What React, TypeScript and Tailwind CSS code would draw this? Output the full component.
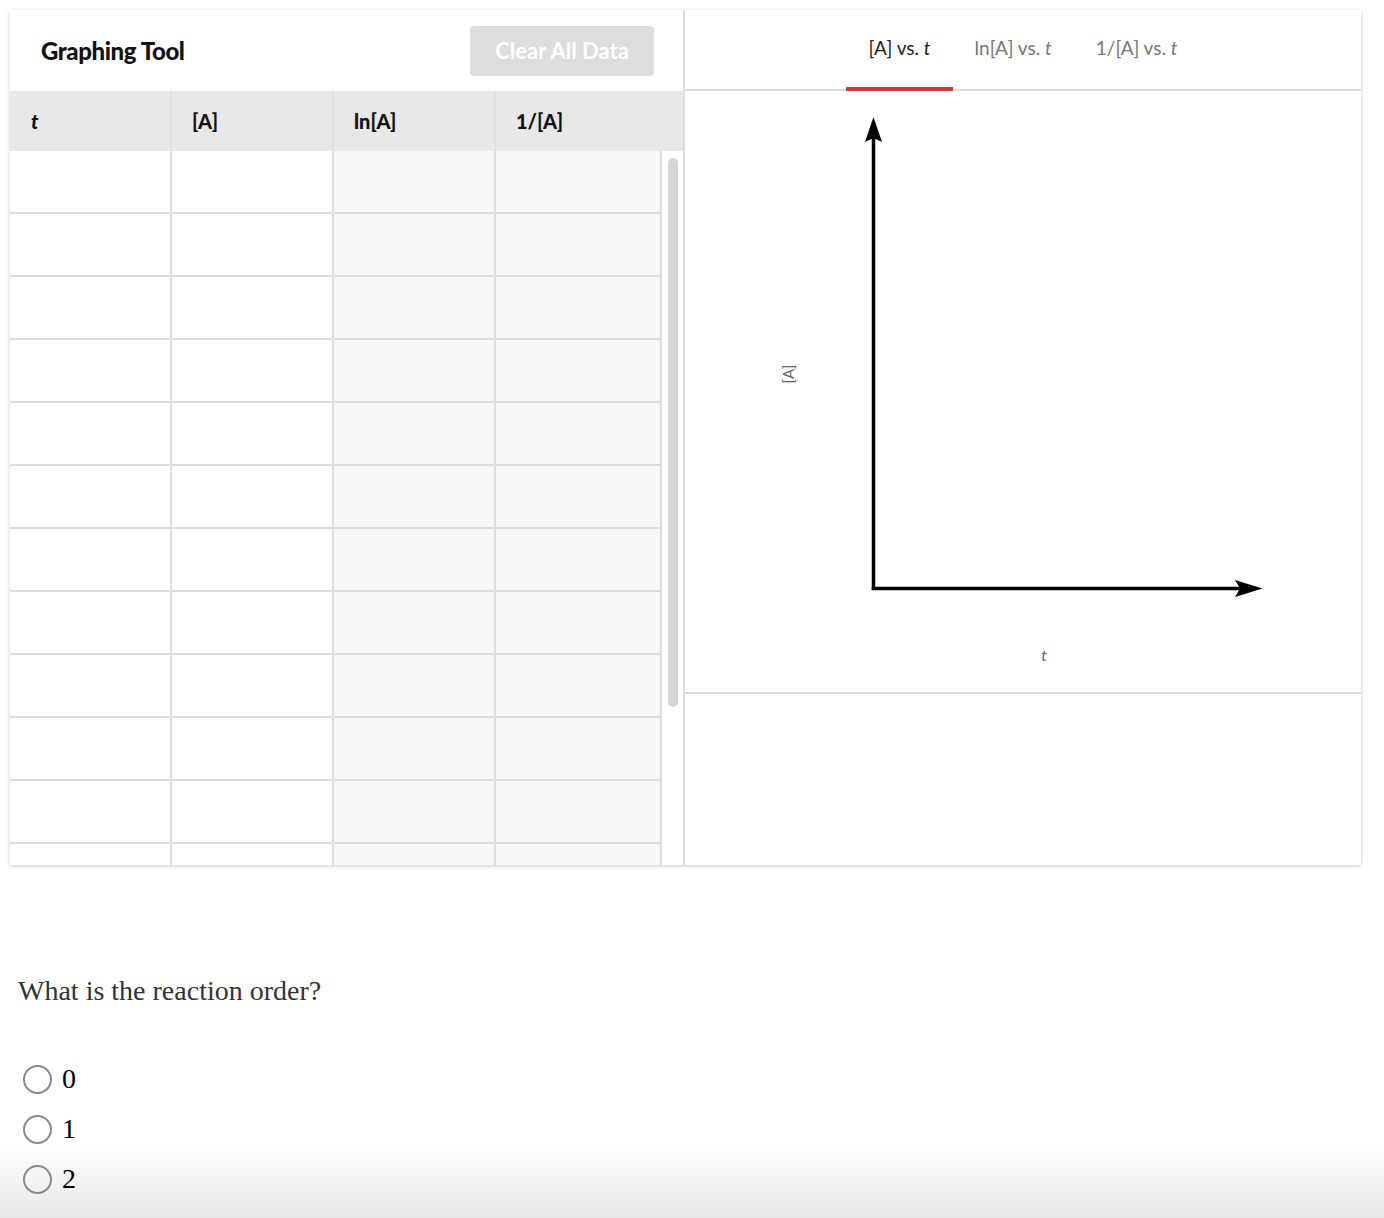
import React, { useState } from 'react';

const SANS = "font-['Lato','Noto_Sans',sans-serif]";

const ROWS = Array.from({ length: 12 });

type Tab = 'a' | 'ln' | 'inv';

const TABS: { id: Tab; label: string }[] = [
  { id: 'a', label: '[A] vs. ' },
  { id: 'ln', label: 'ln[A] vs. ' },
  { id: 'inv', label: '1/[A] vs. ' },
];

const DataTable: React.FC = () => (
  <div className="flex flex-col">
    {/* Column headers */}
    <div className="flex h-[60px] bg-[#e8e8e8] text-[20px] font-black text-[#111]">
      <div className="flex w-[162px] items-center border-r-2 border-[#e0e0e0] pl-[21px] italic">t</div>
      <div className="flex w-[162px] items-center border-r-2 border-[#e0e0e0] pl-[20px]">[A]</div>
      <div className="flex w-[162px] items-center border-r-2 border-[#e0e0e0] pl-[20px]">ln[A]</div>
      <div className="flex flex-1 items-center pl-[20px]">1/[A]</div>
    </div>

    {/* Body + scroll track */}
    <div className="flex h-[714px] overflow-hidden">
      <div className="w-[650px]">
        {ROWS.map((_, i) => (
          <div key={i} className="flex h-[63px] border-b-2 border-[#dddddd]">
            <div className="w-[162px] border-r-2 border-[#dddddd] bg-white" />
            <div className="w-[162px] border-r-2 border-[#dddddd] bg-white" />
            <div className="w-[162px] border-r-2 border-[#dddddd] bg-[#f7f7f7]" />
            <div className="flex-1 bg-[#f7f7f7]" />
          </div>
        ))}
      </div>
      <div className="flex-1 border-l-2 border-[#dddddd] pl-[6px] pt-[7px]">
        <div className="h-[549px] w-[10px] rounded-full bg-[#d6d6d6]" />
      </div>
    </div>
  </div>
);

const Graph: React.FC = () => (
  <svg width="676" height="601" className="block">
    {/* y axis */}
    <line x1="188.5" y1="46" x2="188.5" y2="499" stroke="#000" strokeWidth="3.5" />
    <polygon points="188.5,26 180,51 188.5,47 197,51" fill="#000" />
    {/* x axis */}
    <line x1="186.75" y1="497.5" x2="556" y2="497.5" stroke="#000" strokeWidth="3.5" />
    <polygon points="577.5,497.5 550,489 555,497.5 550,506" fill="#000" />
    <text
      x="105"
      y="283"
      transform="rotate(-90 105 283)"
      textAnchor="middle"
      dominantBaseline="middle"
      fontSize="15"
      fill="#666"
      fontFamily="Lato, 'Noto Sans', sans-serif"
    >
      [A]
    </text>
    <text
      x="359"
      y="566"
      textAnchor="middle"
      dominantBaseline="middle"
      fontSize="16"
      fontStyle="italic"
      fill="#666"
      fontFamily="Lato, 'Noto Sans', sans-serif"
    >
      t
    </text>
  </svg>
);

const App: React.FC = () => {
  const [tab, setTab] = useState<Tab>('a');
  const [order, setOrder] = useState<string | null>(null);

  return (
    <div className="min-h-[1218px] bg-[linear-gradient(to_bottom,#ffffff_1140px,#e9e9e9_1218px)] p-[10px]">
      {/* Graphing tool card */}
      <div className={`flex h-[855px] w-[1351px] overflow-hidden bg-white shadow-[0_1px_4px_rgba(0,0,0,0.22)] ${SANS}`}>
        {/* Left: data table */}
        <div className="flex w-[673px] flex-col">
          <div className="flex h-[81px] items-center justify-between pl-[31px] pr-[29px]">
            <h1 className="text-[24px] font-black tracking-[-0.4px] text-[#111]">Graphing Tool</h1>
            <button
              type="button"
              disabled
              className="h-[50px] w-[184px] rounded-[4px] bg-[#dddddd] text-[22px] font-bold text-white"
            >
              Clear All Data
            </button>
          </div>
          <DataTable />
        </div>

        {/* Right: graph */}
        <div className="flex flex-1 flex-col border-l-2 border-[#dddddd]">
          <div className="flex h-[81px] justify-center border-b-2 border-[#dddddd]">
            {TABS.map((t) => (
              <button
                key={t.id}
                type="button"
                onClick={() => setTab(t.id)}
                className={`relative px-[22px] pb-[2px] text-[19px] ${tab === t.id ? 'text-[#222]' : 'text-[#777]'}`}
              >
                {t.label}
                <span className="italic">t</span>
                {tab === t.id && (
                  <span className="absolute bottom-[-2px] left-0 right-0 h-[4px] bg-[#d0363c]" />
                )}
              </button>
            ))}
          </div>
          <div className="border-b-2 border-[#dddddd]">
            <Graph />
          </div>
          <div className="flex-1" />
        </div>
      </div>

      {/* Question */}
      <div className="pl-[8px] pt-[110px] font-['Liberation_Serif',serif]">
        <p className="text-[28px] leading-[32px] text-[#333]">What is the reaction order?</p>
        <div className="mt-[56px] flex flex-col gap-[18px]">
          {['0', '1', '2'].map((v) => (
            <label key={v} className="flex h-[32px] cursor-pointer items-center gap-[10px] pl-[5px] text-[28px] text-black">
              <span
                onClick={() => setOrder(v)}
                className="flex h-[29px] w-[29px] items-center justify-center rounded-full border-[2.5px] border-[#8a8a8a]"
              >
                {order === v && <span className="h-[15px] w-[15px] rounded-full bg-[#555]" />}
              </span>
              {v}
            </label>
          ))}
        </div>
      </div>
    </div>
  );
};

export default App;
